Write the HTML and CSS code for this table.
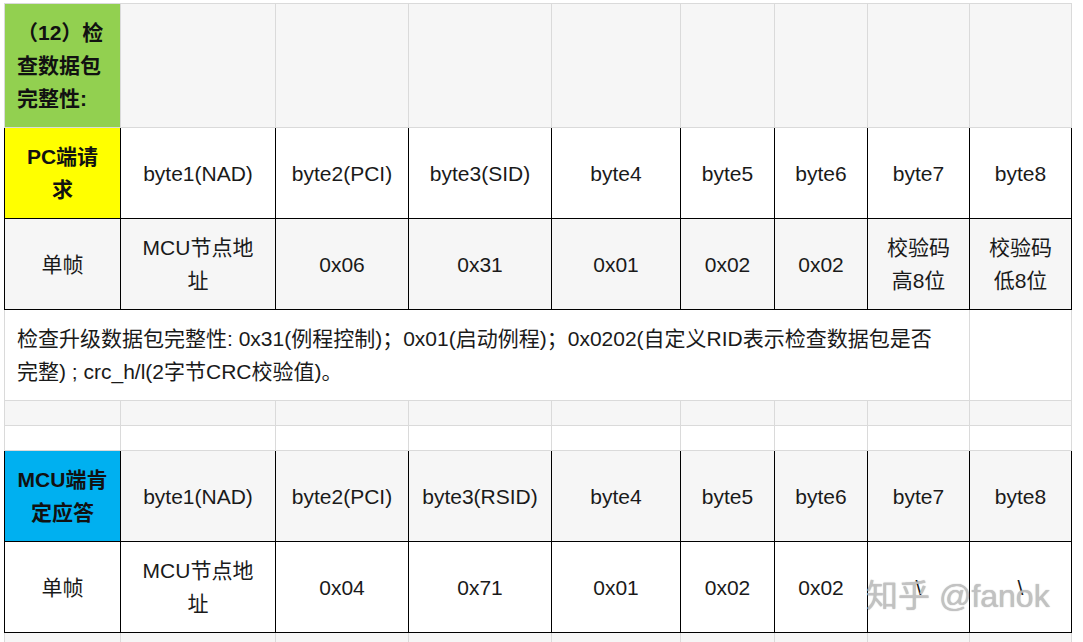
FILE: index.html
```html
<!DOCTYPE html>
<html lang="zh-CN">
<head>
<meta charset="utf-8">
<title>检查数据包完整性</title>
<link rel="stylesheet" href="styles.css">
</head>
<body>
<div class="sheet">
  <table class="grid">
    <colgroup>
      <col class="c1"><col class="c2"><col class="c3"><col class="c4"><col class="c5"><col class="c6"><col class="c7"><col class="c8"><col class="c9">
    </colgroup>
    <tbody>
      <tr class="r-title band">
        <td class="green title">（12）检<br>查数据包<br>完整性:</td>
        <td></td><td></td><td></td><td></td><td></td><td></td><td></td><td></td>
      </tr>
      <tr class="r-main boxed">
        <td class="yellow label">PC端请<br>求</td>
        <td>byte1(NAD)</td><td>byte2(PCI)</td><td>byte3(SID)</td><td>byte4</td><td>byte5</td><td>byte6</td><td>byte7</td><td>byte8</td>
      </tr>
      <tr class="r-main boxed band">
        <td>单帧</td>
        <td>MCU节点地<br>址</td><td>0x06</td><td>0x31</td><td>0x01</td><td>0x02</td><td>0x02</td><td>校验码<br>高8位</td><td>校验码<br>低8位</td>
      </tr>
      <tr class="r-main">
        <td class="note" colspan="8">检查升级数据包完整性: 0x31(例程控制)；0x01(启动例程)；0x0202(自定义RID表示检查数据包是否<br>完整) ; crc_h/l(2字节CRC校验值)。</td>
        <td></td>
      </tr>
      <tr class="r-thin band">
        <td></td><td></td><td></td><td></td><td></td><td></td><td></td><td></td><td></td>
      </tr>
      <tr class="r-thin">
        <td></td><td></td><td></td><td></td><td></td><td></td><td></td><td></td><td></td>
      </tr>
      <tr class="r-main boxed band">
        <td class="blue label">MCU端肯<br>定应答</td>
        <td>byte1(NAD)</td><td>byte2(PCI)</td><td>byte3(RSID)</td><td>byte4</td><td>byte5</td><td>byte6</td><td>byte7</td><td>byte8</td>
      </tr>
      <tr class="r-main boxed">
        <td>单帧</td>
        <td>MCU节点地<br>址</td><td>0x04</td><td>0x71</td><td>0x01</td><td>0x02</td><td>0x02</td><td>\</td><td>\</td>
      </tr>
      <tr class="r-tail band">
        <td></td><td></td><td></td><td></td><td></td><td></td><td></td><td></td><td></td>
      </tr>
    </tbody>
  </table>
  <div class="watermark">知乎 @fanok</div>
</div>
</body>
</html>
```
FILE: styles.css
```css
html, body {
  margin: 0;
  padding: 0;
  background: #ffffff;
}

body {
  font-family: "Liberation Sans", "Noto Sans CJK SC", sans-serif;
  color: #1a1a1a;
}

.sheet {
  position: relative;
  width: 1083px;
  height: 642px;
  overflow: hidden;
  padding: 3px 0 0 4px;
  box-sizing: border-box;
}

.grid {
  border-collapse: collapse;
  table-layout: fixed;
  width: 1068px;
}

.c1 { width: 116px; }
.c2 { width: 155px; }
.c3 { width: 133px; }
.c4 { width: 143px; }
.c5 { width: 129px; }
.c6 { width: 94px; }
.c7 { width: 93px; }
.c8 { width: 102px; }
.c9 { width: 102px; }

.grid td {
  border: 1px solid #dadada;
  padding: 0 4px;
  font-size: 21px;
  line-height: 33px;
  text-align: center;
  vertical-align: middle;
  background: #ffffff;
}

.grid tr.band td {
  background: #f6f6f6;
}

.grid tr.boxed td {
  border-color: #000000;
}

.r-title td { height: 123px; }
.r-main td { height: 90px; }
.r-thin td { height: 24px; }
.r-tail td { height: 20px; }

.grid td.title {
  text-align: left;
  padding-left: 12px;
  font-weight: bold;
  color: #111;
}

.grid td.label {
  font-weight: bold;
  color: #111;
}

.grid tr td.green { background: #92d050; }
.grid tr td.yellow { background: #ffff00; }
.grid tr td.blue { background: #00b0f0; }

.grid td.note {
  text-align: left;
  padding-left: 12px;
}

.watermark {
  position: absolute;
  left: 866px;
  top: 576px;
  font-size: 32px;
  line-height: 40px;
  color: rgba(200, 200, 200, 0.85);
  text-shadow: 0 0 1px rgba(90, 90, 90, 0.6);
  white-space: nowrap;
  pointer-events: none;
}
```
